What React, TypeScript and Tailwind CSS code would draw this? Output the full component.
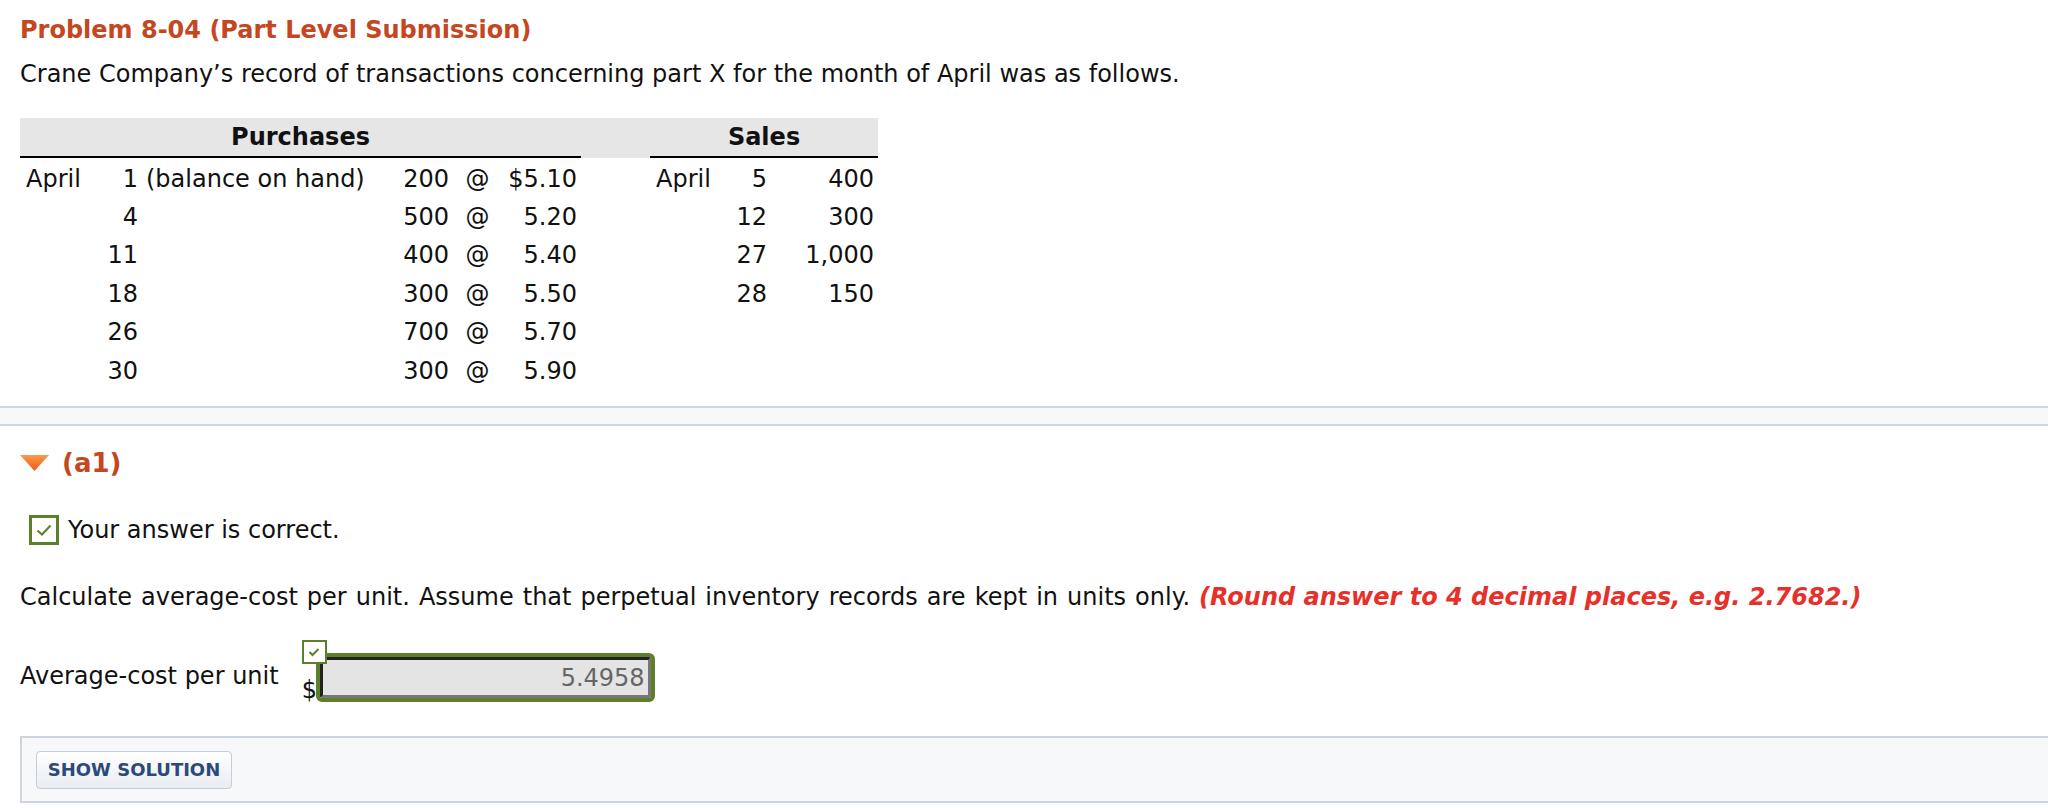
export default function App() {

  const purchases = [
    { day: "1", note: "(balance on hand)", qty: "200", price: "$5.10" },
    { day: "4", note: "", qty: "500", price: "5.20" },
    { day: "11", note: "", qty: "400", price: "5.40" },
    { day: "18", note: "", qty: "300", price: "5.50" },
    { day: "26", note: "", qty: "700", price: "5.70" },
    { day: "30", note: "", qty: "300", price: "5.90" },
  ]

  const sales = [
    { day: "5", qty: "400" },
    { day: "12", qty: "300" },
    { day: "27", qty: "1,000" },
    { day: "28", qty: "150" },
  ]

  return (

    <main className="w-[2048px] h-[808px] overflow-hidden bg-white text-[#111] font-['DejaVu_Sans',sans-serif] text-[24px]">

      {/* PROBLEM HEADER */}

      <div className="pl-[20px] pt-[15px]">

        <h1 className="text-[24px] leading-[30px] font-bold text-[#c5471f]">
          Problem 8-04 (Part Level Submission)
        </h1>

        <p className="mt-[14px] leading-[30px]">
          Crane Company’s record of transactions concerning part X for the month of April was as follows.
        </p>

        {/* TABLE */}

        <table className="mt-[29px] table-fixed border-collapse w-[858px]">

          <colgroup>
            <col className="w-[80px]" />
            <col className="w-[42px]" />
            <col className="w-[248px]" />
            <col className="w-[65px]" />
            <col className="w-[45px]" />
            <col className="w-[81px]" />
            <col className="w-[69px]" />
            <col className="w-[70px]" />
            <col className="w-[51px]" />
            <col className="w-[107px]" />
          </colgroup>

          <thead>
            <tr className="h-[39px] bg-[#e6e6e6]">
              <th colSpan={6} className="p-0 font-bold text-center border-b-2 border-black leading-[30px]">
                Purchases
              </th>
              <th className="p-0 border-b-2 border-[#e6e6e6]"></th>
              <th colSpan={3} className="p-0 font-bold text-center border-b-2 border-black leading-[30px]">
                Sales
              </th>
            </tr>
          </thead>

          <tbody className="leading-[28px]">
            {purchases.map((p, i) => (
              <tr key={i} className="h-[38.4px]">
                <td className="p-0 pt-[5px] pl-[6px] whitespace-nowrap">{i === 0 ? "April" : ""}</td>
                <td className="p-0 pt-[5px] pr-[4px] text-right">{p.day}</td>
                <td className="p-0 pt-[5px] pl-[4px] whitespace-nowrap">{p.note}</td>
                <td className="p-0 pt-[5px] pr-[6px] text-right">{p.qty}</td>
                <td className="p-0 pt-[5px] text-center">@</td>
                <td className="p-0 pt-[5px] pr-[4px] text-right">{p.price}</td>
                <td className="p-0"></td>
                <td className="p-0 pt-[5px] pl-[6px]">{i === 0 ? "April" : ""}</td>
                <td className="p-0 pt-[5px] pr-[4px] text-right">{sales[i] ? sales[i].day : ""}</td>
                <td className="p-0 pt-[5px] pr-[4px] text-right">{sales[i] ? sales[i].qty : ""}</td>
              </tr>
            ))}
          </tbody>

        </table>

      </div>

      {/* SEPARATOR */}

      <div className="mt-[19px] h-[20px] border-y-2 border-[#cdd5de] bg-[#f6f8fa]"></div>

      {/* PART A1 */}

      <div className="pl-[20px]">

        <div className="mt-[22px] flex items-center h-[30px]">
          <svg width="29" height="16" viewBox="0 0 29 16" className="mr-[13px]">
            <defs>
              <linearGradient id="tri" x1="0" y1="0" x2="0" y2="1">
                <stop offset="0" stopColor="#fa9a4c" />
                <stop offset="1" stopColor="#ec5a16" />
              </linearGradient>
            </defs>
            <polygon points="0,0 29,0 14.5,16" fill="url(#tri)" />
          </svg>
          <span className="font-bold text-[26px] text-[#c5471f] leading-[30px]">(a1)</span>
        </div>

        <div className="mt-[37px] flex items-center h-[30px] pl-[9px]">
          <span className="w-[30px] h-[30px] border-[3px] border-[#5b7f2a] bg-white flex items-center justify-center">
            <svg width="18" height="16" viewBox="0 0 18 16">
              <path d="M2.5 8.5l4.5 4 8.5-9" fill="none" stroke="#5b7f2a" strokeWidth="2" />
            </svg>
          </span>
          <span className="ml-[9px] leading-[30px]">Your answer is correct.</span>
        </div>

        <p className="mt-[37px] leading-[30px] whitespace-nowrap [word-spacing:1.4px]">
          Calculate average-cost per unit. Assume that perpetual inventory records are kept in units only.{" "}
          <span className="font-bold italic text-[#e8302a] [word-spacing:0px]">
            (Round answer to 4 decimal places, e.g. 2.7682.)
          </span>
        </p>

        {/* ANSWER ROW */}

        <div className="mt-[28px] flex items-start">

          <span className="mt-[21px] leading-[30px]">Average-cost per unit</span>

          <div className="relative ml-[23px] pt-[13px] flex items-end">

            <span className="leading-[24px] w-[14px]">$</span>

            <div className="w-[339px] h-[49px] border-[4px] border-[#5b7f2a] rounded-[6px] overflow-hidden">
              <div className="h-full border-[3px] border-t-[#222] border-l-[#222] border-b-[#777] border-r-[#777] bg-[#e4e4e4] flex items-center justify-end pr-[3px] text-[#666] leading-[30px]">
                5.4958
              </div>
            </div>

            <span className="absolute left-0 top-0 w-[25px] h-[24px] border-2 border-[#5b7f2a] bg-white flex items-center justify-center">
              <svg width="14" height="12" viewBox="0 0 14 12">
                <path d="M2.5 6l3 3 6-6" fill="none" stroke="#5b7f2a" strokeWidth="2" />
              </svg>
            </span>

          </div>

        </div>

        {/* SOLUTION */}

        <div className="mt-[34px] border-2 border-r-0 border-[#cdd5de] bg-[#f6f8fa] pl-[14px] pt-[12px] pb-[12px]">
          <button className="h-[38px] w-[196px] border border-[#c5cdd8] rounded-[4px] bg-gradient-to-b from-white to-[#e8edf2] text-[#2b4a7a] font-bold text-[18px] leading-[20px]">
            SHOW SOLUTION
          </button>
        </div>

      </div>

    </main>

  )
}
